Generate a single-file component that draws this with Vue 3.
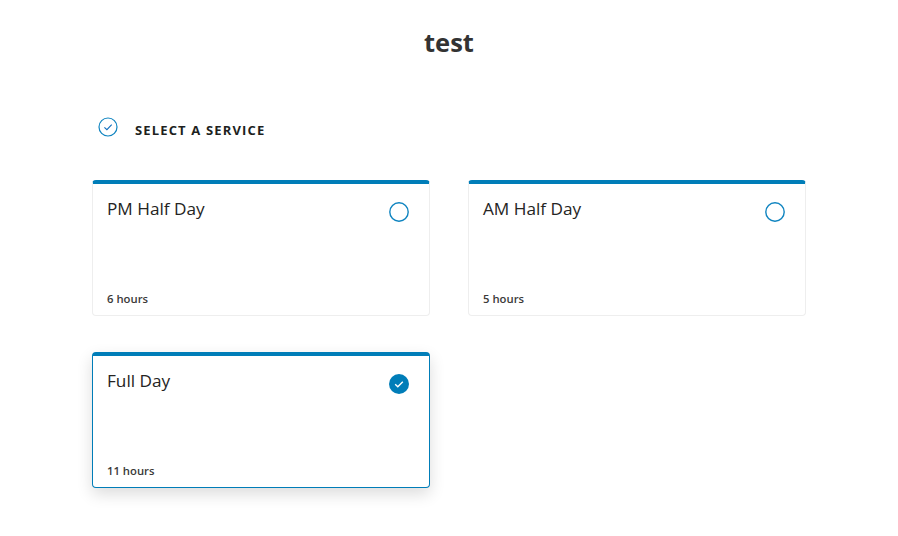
<script setup>
const services = [
  { name: 'PM Half Day', hours: '6 hours', selected: false },
  { name: 'AM Half Day', hours: '5 hours', selected: false },
  { name: 'Full Day', hours: '11 hours', selected: true }
]
</script>

<template>
  <div class="page">
    <h1 class="title">test</h1>
    <div class="step">
      <svg class="step-icon" width="20" height="20" viewBox="0 0 20 20" fill="none">
        <circle cx="10" cy="10" r="9" stroke="#0f84c0" stroke-width="1.2" />
        <path d="M6.4 10.3l2.5 2.4 4.8-5" stroke="#106ebe" stroke-width="1.1" />
      </svg>
      <span class="step-label">SELECT A SERVICE</span>
    </div>
    <div class="grid">
      <div v-for="s in services" :key="s.name" class="card" :class="{ selected: s.selected }">
        <div class="card-top">
          <span class="name">{{ s.name }}</span>
          <svg v-if="s.selected" class="radio" width="20" height="20" viewBox="0 0 20 20" fill="none">
            <circle cx="10" cy="10" r="10" fill="#007db8" />
            <path d="M6.2 10.2l2.6 2.5 5-5" stroke="#fff" stroke-width="1.4" />
          </svg>
          <svg v-else class="radio" width="20" height="20" viewBox="0 0 20 20" fill="none">
            <circle cx="10" cy="10" r="9.2" stroke="#0f84c0" stroke-width="1.4" />
          </svg>
        </div>
        <div class="hours">{{ s.hours }}</div>
      </div>
    </div>
  </div>
</template>

<style scoped>
.page {
  width: 898px;
  height: 536px;
  box-sizing: border-box;
  background: #fff;
  padding: 23px 92px 0;
  font-family: "Open Sans", "Noto Sans", sans-serif;
  overflow: hidden;
}
.title {
  margin: 0;
  height: 38px;
  line-height: 38px;
  text-align: center;
  font-size: 25.5px;
  font-weight: 700;
  color: #333;
}
.step {
  display: flex;
  align-items: center;
  margin-top: 55px;
  padding-left: 5.5px;
  height: 26px;
}
.step-icon {
  flex: none;
  margin-top: -5px;
}
.step-label {
  margin-left: 17.5px;
  margin-top: 1px;
  font-size: 13px;
  font-weight: 700;
  letter-spacing: 1.15px;
  color: #201f1e;
}
.grid {
  display: grid;
  grid-template-columns: 338px 338px;
  column-gap: 38px;
  row-gap: 36px;
  margin-top: 38px;
}
.card {
  height: 136px;
  box-sizing: border-box;
  border: 1px solid #eeeeee;
  border-top: 4px solid #007db8;
  border-radius: 4px;
  background: #fff;
  padding: 13px 20px 8px 14px;
  display: flex;
  flex-direction: column;
  justify-content: space-between;
}
.card.selected {
  border-color: #007db8;
  box-shadow: 0 6px 16px rgba(0, 0, 0, 0.14);
}
.card-top {
  display: flex;
  justify-content: space-between;
  align-items: flex-start;
}
.name {
  font-size: 17.2px;
  line-height: 24px;
  color: #252423;
}
.radio {
  margin-top: 5px;
}
.hours {
  font-size: 11.3px;
  font-weight: 600;
  line-height: 16px;
  color: #3b3a39;
}
</style>
